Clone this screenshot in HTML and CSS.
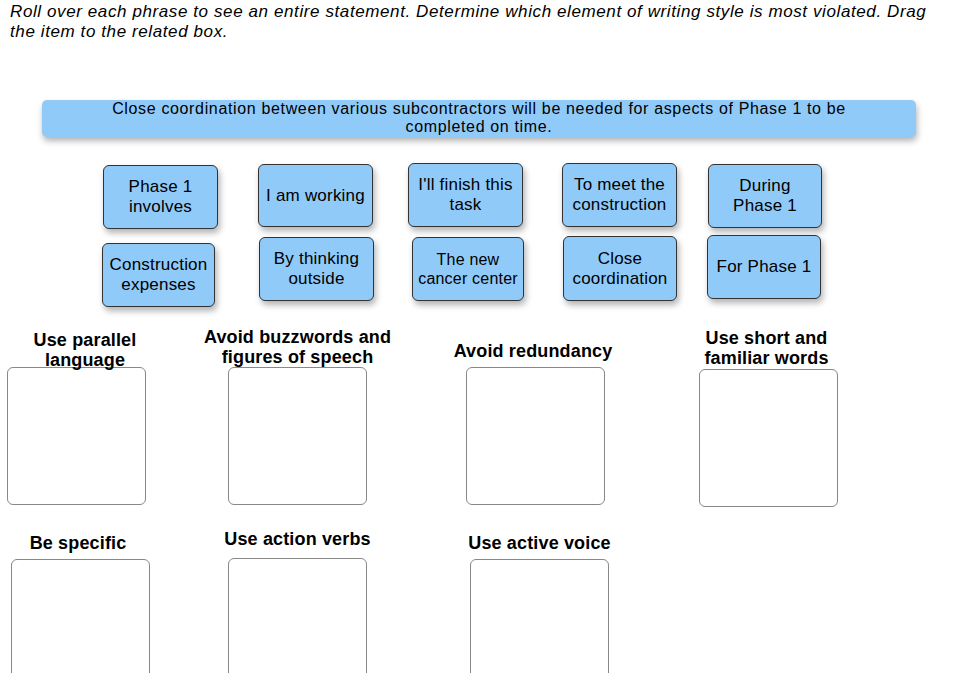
FILE: index.html
```html
<!DOCTYPE html>
<html lang="en">
<head>
    <meta charset="UTF-8">
    <meta name="viewport" content="width=device-width, initial-scale=1.0">
    <title>Writing Style Sort</title>
    <link rel="stylesheet" href="styles.css">
</head>
<body>
    <p class="instructions">Roll over each phrase to see an entire statement. Determine which element of writing style is most violated. Drag the item to the related box.</p>

    <!-- Full statement shown on rollover -->
    <div class="statement">Close coordination between various subcontractors will be needed for aspects of Phase 1 to be<br>completed on time.</div>

    <!-- Draggable phrases -->
    <div class="tiles">
        <div class="tile">Phase 1<br>involves</div>
        <div class="tile">I am working</div>
        <div class="tile">I'll finish this<br>task</div>
        <div class="tile">To meet the<br>construction</div>
        <div class="tile">During<br>Phase 1</div>
        <div class="tile">Construction<br>expenses</div>
        <div class="tile">By thinking<br>outside</div>
        <div class="tile small">The new<br>cancer center</div>
        <div class="tile">Close<br>coordination</div>
        <div class="tile">For Phase 1</div>
    </div>

    <!-- Drop targets -->
    <div class="targets">
        <div class="target">
            <div class="target-label">Use parallel<br>language</div>
            <div class="drop-box"></div>
        </div>
        <div class="target">
            <div class="target-label">Avoid buzzwords and<br>figures of speech</div>
            <div class="drop-box"></div>
        </div>
        <div class="target">
            <div class="target-label">Avoid redundancy</div>
            <div class="drop-box"></div>
        </div>
        <div class="target">
            <div class="target-label">Use short and<br>familiar words</div>
            <div class="drop-box"></div>
        </div>
        <div class="target">
            <div class="target-label">Be specific</div>
            <div class="drop-box"></div>
        </div>
        <div class="target">
            <div class="target-label">Use action verbs</div>
            <div class="drop-box"></div>
        </div>
        <div class="target">
            <div class="target-label">Use active voice</div>
            <div class="drop-box"></div>
        </div>
    </div>
</body>
</html>
```

FILE: styles.css
```css
body {
    margin: 0;
    font-family: "Liberation Sans", Arial, sans-serif;
    color: #000;
    background-color: #fff;
    overflow: hidden;
}
.instructions {
    margin: 0;
    padding: 2px 10px 0;
    max-width: 935px;
    font-size: 17px;
    line-height: 20px;
    letter-spacing: 0.6px;
    font-style: italic;
}
.statement {
    margin: 58px 0 0 42px;
    width: 874px;
    padding-bottom: 1px;
    font-size: 16px;
    line-height: 18px;
    letter-spacing: 0.65px;
    text-align: center;
    background-color: #90caf9;
    border-radius: 5px;
    box-shadow: 1px 4px 6px rgba(0,0,0,0.3);
}
.tiles {
    display: grid;
    grid-template-columns: 155px 152px 152px 145px 115px;
    grid-template-rows: 64px 64px;
    row-gap: 9px;
    margin-top: 26px;
    padding-left: 103px;
}
.tile {
    box-sizing: border-box;
    width: 115px;
    height: 64px;
    display: flex;
    align-items: center;
    justify-content: center;
    text-align: center;
    font-size: 17px;
    line-height: 20px;
    letter-spacing: 0.2px;
    background-color: #90caf9;
    border: 1px solid #333;
    border-radius: 6px;
    box-shadow: 2px 4px 6px rgba(0,0,0,0.3);
    cursor: move;
}
.tile.small {
    font-size: 16px;
    line-height: 19px;
    width: 112px;
}
.tile:nth-child(1) { margin-top: 2px; }
.tile:nth-child(2) { margin-top: 1px; height: 63px; }
.tile:nth-child(3) { margin-left: -2px; }
.tile:nth-child(5) { margin: 1px 0 0 1px; width: 114px; }
.tile:nth-child(6) { margin: 7px 0 0 -1px; width: 113px; }
.tile:nth-child(7) { margin: 1px 0 0 1px; }
.tile:nth-child(8) { margin: 1px 0 0 2px; }
.tile:nth-child(9) { margin-left: 1px; width: 114px; height: 65px; }
.tile:nth-child(10) { margin-top: -1px; width: 114px; }

.targets {
    display: grid;
    grid-template-columns: 221px 238px 233px 139px;
    row-gap: 22px;
    align-items: start;
    margin-top: 22px;
    padding-left: 7px;
}
.target {
    width: 139px;
    display: flex;
    flex-direction: column;
    align-items: center;
}
.target-label {
    font-size: 18px;
    line-height: 20px;
    font-weight: bold;
    letter-spacing: 0.15px;
    text-align: center;
    white-space: nowrap;
}
.drop-box {
    box-sizing: border-box;
    width: 139px;
    height: 138px;
    border: 1px solid #888;
    border-radius: 6px;
    background-color: #fff;
}
.target:nth-child(1) { margin-top: 8px; }
.target:nth-child(1) .target-label { margin-left: 17px; position: relative; z-index: 1; }
.target:nth-child(1) .drop-box { margin-top: -3px; }
.target:nth-child(2) { margin-top: 5px; }
.target:nth-child(3) { margin-top: 19px; }
.target:nth-child(3) .target-label { margin-right: 5px; }
.target:nth-child(3) .drop-box { margin-top: 6px; }
.target:nth-child(4) { margin-top: 6px; }
.target:nth-child(4) .target-label { margin-right: 4px; }
.target:nth-child(4) .drop-box { margin-top: 1px; }
.target:nth-child(5) { margin: 4px 0 0 4px; }
.target:nth-child(5) .target-label { margin-right: 5px; }
.target:nth-child(5) .drop-box { margin-top: 6px; }
.target:nth-child(6) .drop-box { margin-top: 9px; }
.target:nth-child(7) { margin: 4px 0 0 4px; }
.target:nth-child(7) .drop-box { margin-top: 6px; }
```
